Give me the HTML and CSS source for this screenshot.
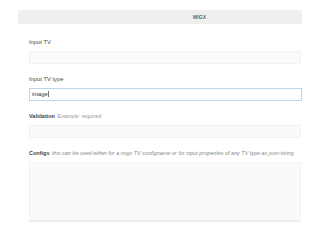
FILE: index.html
```html
<!DOCTYPE html>
<html lang="en">
<head>
  <meta charset="UTF-8" />
  <meta name="viewport" content="width=device-width, initial-scale=1.0"/>
  <title>MIGX</title>
  <link rel="stylesheet" href="styles.css">
</head>
<body>
  <div class="window">
    <div class="window-header">
      <span class="window-title">MIGX</span>
    </div>

    <form class="form">
      <div class="field">
        <label class="field-label">Input TV</label>
        <div class="input"></div>
      </div>

      <div class="field">
        <label class="field-label">Input TV type</label>
        <div class="input focused">image<span class="caret"></span></div>
      </div>

      <div class="field">
        <label class="field-label"><strong>Validation</strong> <span class="hint-plain">Example: required</span></label>
        <div class="input"></div>
      </div>

      <div class="field">
        <label class="field-label"><strong>Configs</strong> <em class="hint">this can be used either for a migx TV configname or for input properties of any TV type as json-string</em></label>
        <div class="input textarea"></div>
      </div>
    </form>
  </div>
</body>
</html>
```

FILE: styles.css
```css
* {
  box-sizing: border-box;
}

body {
  margin: 0;
  background: #fff;
  font-family: 'Liberation Sans', Arial, sans-serif;
  color: #555;
}

.window {
  padding-top: 10px;
}

.window-header {
  margin: 0 18px;
  height: 14px;
  background: #efefef;
  display: flex;
  align-items: center;
  padding-left: 175px;
}

.window-title {
  font-size: 5px;
  font-weight: bold;
  color: #666;
  letter-spacing: 0.1px;
}

.form {
  padding: 14px 19px 0 29px;
}

.field {
  margin-bottom: 11px;
}

.field-label {
  display: block;
  height: 8px;
  line-height: 8px;
  margin-bottom: 5px;
  font-size: 5.8px;
  color: #4a4a4a;
  white-space: nowrap;
}

.field-label strong {
  color: #444;
  font-size: 5.5px;
}

.hint-plain {
  color: #999;
  font-size: 5.4px;
  margin-left: 1px;
}

.hint {
  color: #888;
  font-size: 5.45px;
  margin-left: 1px;
}

.input {
  height: 13px;
  background: #fafafa;
  border: 1px solid #f2f2f2;
  font-size: 5.8px;
  line-height: 11px;
  padding-left: 2px;
  color: #333;
}

.input.focused {
  background: #fff;
  border: 1px solid #b5d9e6;
  margin-right: -1px;
}

.caret {
  display: inline-block;
  width: 0.5px;
  height: 6px;
  background: #777;
  vertical-align: -1px;
  margin-left: 0.5px;
}

.textarea {
  height: 60px;
  border-bottom: 2px solid #ededed;
}
```
